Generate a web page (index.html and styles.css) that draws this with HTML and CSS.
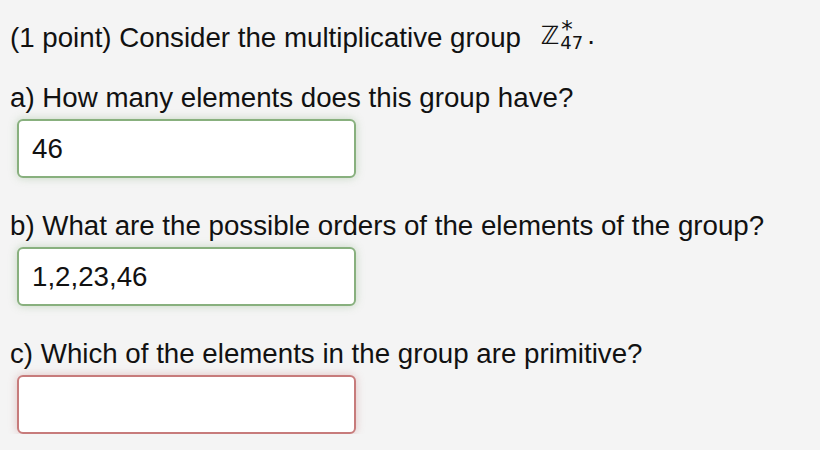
FILE: index.html
```html
<!DOCTYPE html>
<html>
<head>
<meta charset="utf-8">
<link rel="stylesheet" href="styles.css">
</head>
<body>
<div class="problem">
  <p class="intro">(1 point) Consider the multiplicative group <span class="math"><span class="bb">ℤ</span><span class="scripts"><span class="sup">*</span><span class="sub">47</span></span><span class="dot">.</span></span></p>
  <p class="q first">a) How many elements does this group have?</p>
  <div class="answer ok">46</div>
  <p class="q">b) What are the possible orders of the elements of the group?</p>
  <div class="answer ok">1,2,23,46</div>
  <p class="q">c) Which of the elements in the group are primitive?</p>
  <div class="answer bad"></div>
</div>
</body>
</html>
```
FILE: styles.css
```css
html, body {
  margin: 0;
  padding: 0;
  background: #f4f4f4;
}
body {
  font-family: "Liberation Sans", Arial, sans-serif;
  font-size: 27.7px;
  color: #111;
}
.problem {
  padding: 18px 0 0 10px;
}
.intro {
  margin: 0;
  line-height: 34px;
  height: 34px;
}
.math {
  font-family: "DejaVu Sans", sans-serif;
}
.bb {
  font-size: 25px;
  vertical-align: 3px;
  margin-left: 12px;
}
.scripts {
  display: inline-block;
  vertical-align: -2px;
  margin-left: 1px;
  font-size: 18px;
}
.sup {
  display: block;
  font-size: 23px;
  line-height: 13px;
  height: 13px;
  padding-left: 1px;
}
.sub {
  display: block;
  line-height: 14px;
}
.dot {
  font-family: "Liberation Sans", Arial, sans-serif;
  margin-left: 4px;
  vertical-align: 3px;
}
.q {
  margin: 31px 0 0 0;
  line-height: 34px;
}
.q.first {
  margin-top: 29px;
}
.answer {
  box-sizing: border-box;
  width: 339px;
  height: 59px;
  margin: 4px 0 0 7px;
  background: #fff;
  border-radius: 6px;
  padding: 0 13px;
  line-height: 56px;
  color: #111;
}
.answer.ok {
  border: 2px solid #88b07e;
  box-shadow: 0 0 8px rgba(110, 160, 100, 0.35);
}
.answer.bad {
  border: 2px solid #c77b7b;
  box-shadow: 0 0 8px rgba(190, 100, 100, 0.35);
}
```
